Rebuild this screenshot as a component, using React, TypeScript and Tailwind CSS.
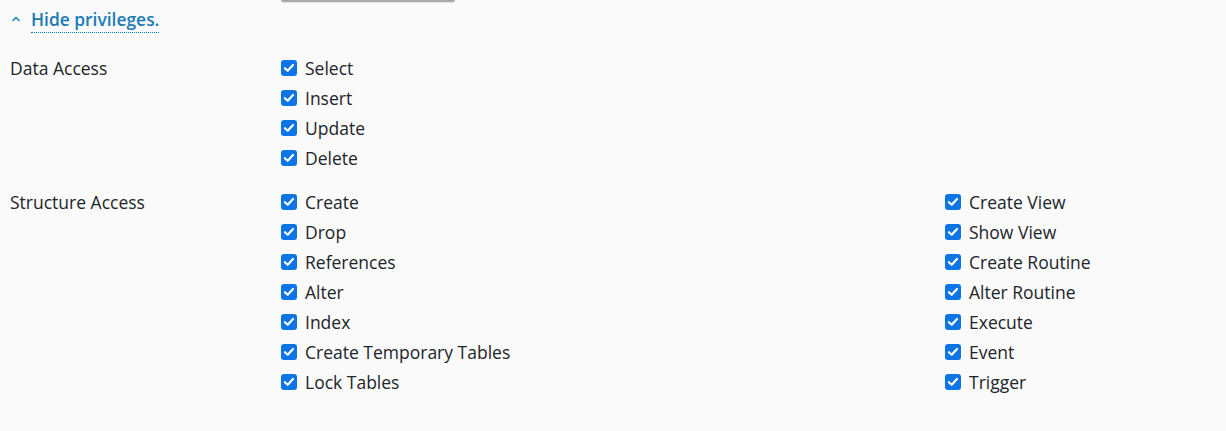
const dataAccess = ["Select", "Insert", "Update", "Delete"];
const structureLeft = [
  "Create",
  "Drop",
  "References",
  "Alter",
  "Index",
  "Create Temporary Tables",
  "Lock Tables",
];
const structureRight = [
  "Create View",
  "Show View",
  "Create Routine",
  "Alter Routine",
  "Execute",
  "Event",
  "Trigger",
];

const Check = ({ label }: { label: string }) => (
  <label className="flex items-center h-[30px] gap-2">
    <span className="flex items-center justify-center w-4 h-4 rounded-[3px] bg-[#0b75e5]">
      <svg viewBox="0 0 16 16" className="w-[14px] h-[14px]" fill="none">
        <path
          d="M3.3 8.2 L6.5 11.2 L12.6 4.6"
          stroke="white"
          strokeWidth="2.5"
          strokeLinecap="round"
          strokeLinejoin="round"
        />
      </svg>
    </span>
    <span>{label}</span>
  </label>
);

const App = () => {
  return (
    <div
      className="w-[1226px] h-[431px] bg-[#fafafa] text-[#212529] text-[17.5px] overflow-hidden"
      style={{ fontFamily: '"Open Sans", sans-serif' }}
    >
      {/* bottom edge of the input above */}
      <div className="ml-[281px] w-[174px] h-[2px] bg-[#a9a9a9] rounded-b shadow-[0_1px_1px_rgba(0,0,0,0.1)]" />

      <div className="flex items-center h-[34px] pl-[10px]">
        <svg viewBox="0 0 12 12" className="w-3 h-3 mr-[9px]" fill="none">
          <path d="M2.5 8 L6 4.5 L9.5 8" stroke="#1a7ab5" strokeWidth="1.4" />
        </svg>
        <a className="text-[#1a7ab5] font-semibold text-[17.4px] border-b border-dotted border-[#1a7ab5] leading-[26px] cursor-pointer">
          Hide privileges.
        </a>
      </div>

      <div className="grid grid-cols-[271px_664px_1fr] pl-[10px] mt-[17px]">
        <div className="h-[30px] flex items-center">Data Access</div>
        <div>
          {dataAccess.map((p) => (
            <Check key={p} label={p} />
          ))}
        </div>
        <div />

        <div className="h-[30px] flex items-center mt-[14px]">Structure Access</div>
        <div className="mt-[14px]">
          {structureLeft.map((p) => (
            <Check key={p} label={p} />
          ))}
        </div>
        <div className="mt-[14px]">
          {structureRight.map((p) => (
            <Check key={p} label={p} />
          ))}
        </div>
      </div>
    </div>
  );
};

export default App;
